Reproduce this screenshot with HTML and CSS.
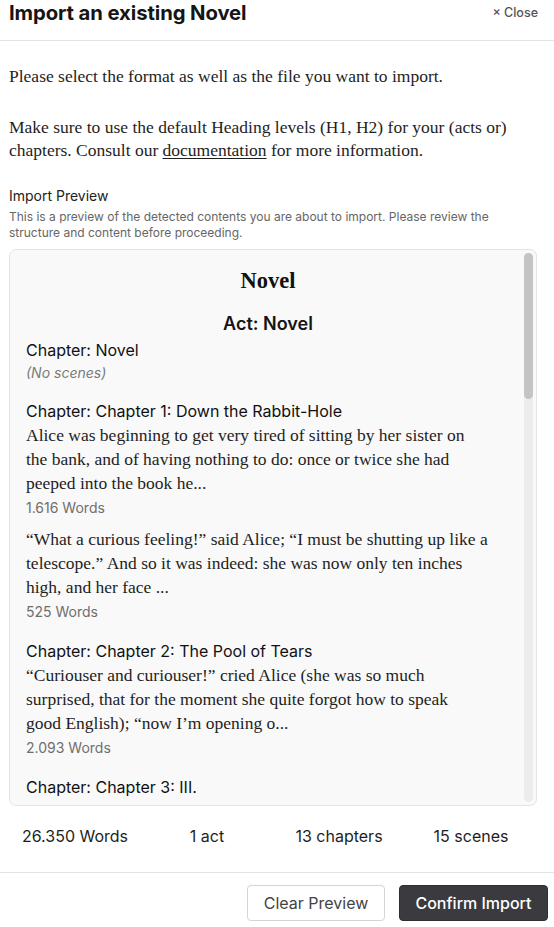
FILE: index.html
```html
<!DOCTYPE html>
<html lang="en">
<head>
<meta charset="utf-8">
<title>Import an existing Novel</title>
<link rel="stylesheet" href="styles.css">
</head>
<body>
<div class="modal">
  <header class="modal-header">
    <h1 class="modal-title">Import an existing Novel</h1>
    <button class="close-btn">× Close</button>
  </header>
  <main class="modal-body">
    <p class="lead">Please select the format as well as the file you want to import.</p>
    <p class="lead">Make sure to use the default Heading levels (H1, H2) for your (acts or) chapters. Consult our <a href="#" class="doc-link">documentation</a> for more information.</p>

    <section class="preview-section">
      <div class="preview-label">Import Preview</div>
      <div class="preview-help">This is a preview of the detected contents you are about to import. Please review the structure and content before proceeding.</div>

      <div class="preview-box">
        <div class="preview-scroll">
          <h2 class="novel-title">Novel</h2>
          <h3 class="act-title">Act: Novel</h3>

          <div class="chapter">
            <div class="chapter-title">Chapter: Novel</div>
            <div class="no-scenes">(No scenes)</div>
          </div>

          <div class="chapter">
            <div class="chapter-title">Chapter: Chapter 1: Down the Rabbit-Hole</div>
            <div class="scene">
              <p class="excerpt">Alice was beginning to get very tired of sitting by her sister on<br>the bank, and of having nothing to do: once or twice she had<br>peeped into the book he...</p>
              <div class="word-count">1.616 Words</div>
            </div>
            <div class="scene">
              <p class="excerpt">“What a curious feeling!” said Alice; “I must be shutting up like a<br>telescope.” And so it was indeed: she was now only ten inches<br>high, and her face ...</p>
              <div class="word-count">525 Words</div>
            </div>
          </div>

          <div class="chapter">
            <div class="chapter-title">Chapter: Chapter 2: The Pool of Tears</div>
            <div class="scene">
              <p class="excerpt">“Curiouser and curiouser!” cried Alice (she was so much<br>surprised, that for the moment she quite forgot how to speak<br>good English); “now I’m opening o...</p>
              <div class="word-count">2.093 Words</div>
            </div>
          </div>

          <div class="chapter">
            <div class="chapter-title">Chapter: Chapter 3: III.</div>
            <div class="scene">
              <p class="excerpt">A Caucus-Race and a Long Tale They were indeed a queer-looking<br>party that assembled on the bank—the birds with draggled<br>feathers, the animals with their fur...</p>
              <div class="word-count">1.820 Words</div>
            </div>
          </div>
        </div>
        <div class="scrollbar"><div class="scrollbar-thumb"></div></div>
      </div>

      <div class="stats">
        <div class="stat">26.350 Words</div>
        <div class="stat">1 act</div>
        <div class="stat">13 chapters</div>
        <div class="stat">15 scenes</div>
      </div>
    </section>
  </main>
  <footer class="modal-footer">
    <button class="btn btn-secondary">Clear Preview</button>
    <button class="btn btn-primary">Confirm Import</button>
  </footer>
</div>
</body>
</html>
```
FILE: styles.css
```css
* { box-sizing: border-box; }

html, body {
  margin: 0;
  padding: 0;
  background: #ffffff;
}

body {
  font-family: Inter, "Noto Sans", sans-serif;
  color: #1a1a1a;
}

.modal {
  width: 554px;
}

.modal-header {
  display: flex;
  justify-content: space-between;
  align-items: flex-start;
  height: 41px;
  padding: 0 16px 0 9px;
  border-bottom: 1px solid #e4e4e4;
}

.modal-title {
  margin: 0;
  font-size: 20.3px;
  line-height: 26px;
  font-weight: 700;
  color: #151515;
  letter-spacing: -0.1px;
}

.close-btn {
  border: 0;
  background: none;
  padding: 0;
  font-family: Inter, sans-serif;
  font-size: 12.5px;
  line-height: 26px;
  font-weight: 500;
  color: #555;
}

.modal-body {
  padding: 24px 17px 0 9px;
}

.lead {
  margin: 0 0 27px;
  font-family: "Liberation Serif", "DejaVu Serif", serif;
  font-size: 17.5px;
  line-height: 23.5px;
  color: #1e1e1e;
}

.lead:last-of-type {
  margin-bottom: 0;
}

.doc-link {
  color: inherit;
  text-decoration: underline;
  text-underline-offset: 2px;
}

.preview-section {
  margin-top: 23px;
}

.preview-label {
  font-size: 14px;
  line-height: 20px;
  color: #222;
}

.preview-help {
  margin-top: 3px;
  font-size: 12px;
  line-height: 16px;
  color: #666;
}

.preview-box {
  position: relative;
  margin-top: 8px;
  height: 557px;
  border: 1px solid #e4e4e4;
  border-radius: 7px;
  background: #f9f9f9;
  overflow: hidden;
}

.preview-scroll {
  height: 100%;
  overflow: hidden;
  padding: 14px 26px 0 16px;
}

.scrollbar {
  position: absolute;
  top: 3px;
  right: 3px;
  bottom: 3px;
  width: 9px;
  border-radius: 5px;
  background: #ececec;
}

.scrollbar-thumb {
  height: 146px;
  border-radius: 5px;
  background: #c4c4c4;
}

.novel-title {
  margin: 0;
  text-align: center;
  font-family: "Liberation Serif", "DejaVu Serif", serif;
  font-size: 22.5px;
  line-height: 34px;
  font-weight: 700;
  color: #111;
}

.act-title {
  margin: 14px 0 0;
  text-align: center;
  font-size: 18px;
  line-height: 24px;
  font-weight: 600;
  color: #151515;
}

.chapter {
  margin-top: 3px;
}

.chapter + .chapter {
  margin-top: 16px;
}

.chapter-title {
  font-size: 16px;
  line-height: 22px;
  font-weight: 400;
  color: #111;
}

.no-scenes {
  font-size: 14px;
  line-height: 22px;
  font-style: italic;
  color: #7a7a7a;
}

.no-scenes {
  margin-top: 1px;
}

.scene {
  padding-top: 1px;
}

.scene + .scene {
  margin-top: 6px;
}

.excerpt {
  margin: 0;
  font-family: "Liberation Serif", "DejaVu Serif", serif;
  font-size: 17.5px;
  line-height: 24px;
  color: #1e1e1e;
  white-space: nowrap;
}

.word-count {
  margin-top: 1px;
  font-size: 14px;
  line-height: 24px;
  color: #6f6f6f;
}

.stats {
  display: grid;
  grid-template-columns: repeat(4, 1fr);
  justify-items: center;
  padding: 18px 0 0;
  height: 66px;
  font-size: 16px;
  line-height: 24px;
  color: #1e1e1e;
}

.modal-footer {
  display: flex;
  justify-content: flex-end;
  gap: 14px;
  border-top: 1px solid #e4e4e4;
  padding: 12px 6px 0 0;
}

.btn {
  height: 36px;
  padding: 0;
  border-radius: 4px;
  font-family: Inter, sans-serif;
  font-size: 16px;
  white-space: nowrap;
  cursor: pointer;
}

.btn-secondary {
  background: #fff;
  border: 1px solid #d4d4d4;
  color: #444;
  font-weight: 400;
  width: 138px;
}

.btn-primary {
  background: #3a3a3f;
  border: 1px solid #2e2e32;
  color: #fff;
  font-weight: 500;
  width: 149px;
}
```
